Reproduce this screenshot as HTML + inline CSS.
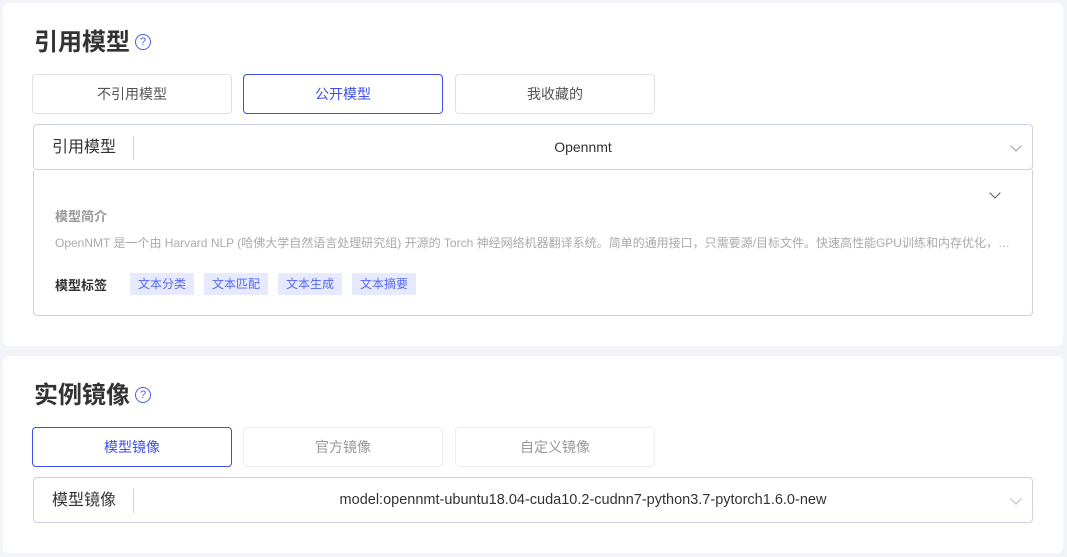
<!DOCTYPE html>
<html><head><meta charset="utf-8"><style>
*{box-sizing:border-box;margin:0;padding:0}
body{width:1067px;height:557px;background:#f3f4f8;font-family:"Liberation Sans","Noto Sans CJK SC",sans-serif;position:relative;overflow:hidden;color:#333}
.card{position:absolute;left:3px;width:1060px;background:#fff;border-radius:6px}
.abs{position:absolute}
.title{font-size:24px;font-weight:bold;color:#333;left:31px;line-height:30px}
.help{width:16px;height:16px;border:1.3px solid #4a5cf0;border-radius:50%;color:#4a5cf0;font-size:11px;line-height:14px;text-align:center}
.btn{width:200px;height:40px;border:1px solid #dfe1ea;border-radius:4px;font-size:14px;color:#555;text-align:center;line-height:38px}
.btn.on{border-color:#3d4eea;color:#3d4eea}
.btn.dis{border-color:#eceef3;color:#999}
.sel{left:30px;width:1000px;height:46px;border:1px solid #cdd1e6;border-radius:4px}
.sel .lab{position:absolute;left:18px;top:11px;font-size:16px;line-height:24px;color:#333}
.sel .div{position:absolute;left:99px;top:11px;width:1px;height:24px;background:#cdd1e6}
.sel .val{position:absolute;left:100px;right:0;top:13px;text-align:center;font-size:14px;line-height:18px;color:#333}
.chev{width:8px;height:8px;border-right:1px solid #999;border-bottom:1px solid #999;transform:rotate(45deg)}
.tag{height:22px;width:64px;background:#e7eafe;color:#5567f0;font-size:12px;line-height:22px;text-align:center}
</style></head><body>
<div class="card" style="top:3px;height:343px">
  <div class="abs title" style="top:25px">引用模型</div>
  <div class="abs help" style="left:132px;top:31px">?</div>
  <div class="abs btn" style="left:29px;top:71px">不引用模型</div>
  <div class="abs btn on" style="left:240px;top:71px">公开模型</div>
  <div class="abs btn" style="left:452px;top:71px">我收藏的</div>
  <div class="abs sel" style="top:121px">
    <div class="lab">引用模型</div><div class="div"></div>
    <div class="val">Opennmt</div>
    <div class="abs chev" style="left:978px;top:17px"></div>
  </div>
  <div class="abs" style="left:30px;top:167px;width:1000px;height:146px;border:1px solid #cdd1e6;border-top:none;border-radius:0 0 4px 4px">
    <div class="abs chev" style="left:957px;top:19px;border-color:#555"></div>
    <div class="abs" style="left:21px;top:36px;font-size:13px;font-weight:bold;color:#999">模型简介</div>
    <div class="abs" style="left:21px;top:64px;font-size:12px;color:#aaa;white-space:nowrap;width:955px;overflow:hidden;text-overflow:ellipsis">OpenNMT 是一个由 Harvard NLP (哈佛大学自然语言处理研究组) 开源的 Torch 神经网络机器翻译系统。简单的通用接口，只需要源/目标文件。快速高性能GPU训练和内存优化，支持多GPU训练和多语言翻译。</div>
    <div class="abs" style="left:21px;top:105px;font-size:13px;font-weight:bold;color:#333">模型标签</div>
    <div class="abs tag" style="left:96px;top:103px">文本分类</div>
    <div class="abs tag" style="left:170px;top:103px">文本匹配</div>
    <div class="abs tag" style="left:244px;top:103px">文本生成</div>
    <div class="abs tag" style="left:318px;top:103px">文本摘要</div>
  </div>
</div>
<div class="card" style="top:356px;height:197px">
  <div class="abs title" style="top:25px">实例镜像</div>
  <div class="abs help" style="left:132px;top:31px">?</div>
  <div class="abs btn on" style="left:29px;top:71px">模型镜像</div>
  <div class="abs btn dis" style="left:240px;top:71px">官方镜像</div>
  <div class="abs btn dis" style="left:452px;top:71px">自定义镜像</div>
  <div class="abs sel" style="top:121px">
    <div class="lab">模型镜像</div><div class="div"></div>
    <div class="val" style="font-size:14.5px">model:opennmt-ubuntu18.04-cuda10.2-cudnn7-python3.7-pytorch1.6.0-new</div>
    <div class="abs chev" style="left:978px;top:17px;border-color:#bbb"></div>
  </div>
</div>
</body></html>
